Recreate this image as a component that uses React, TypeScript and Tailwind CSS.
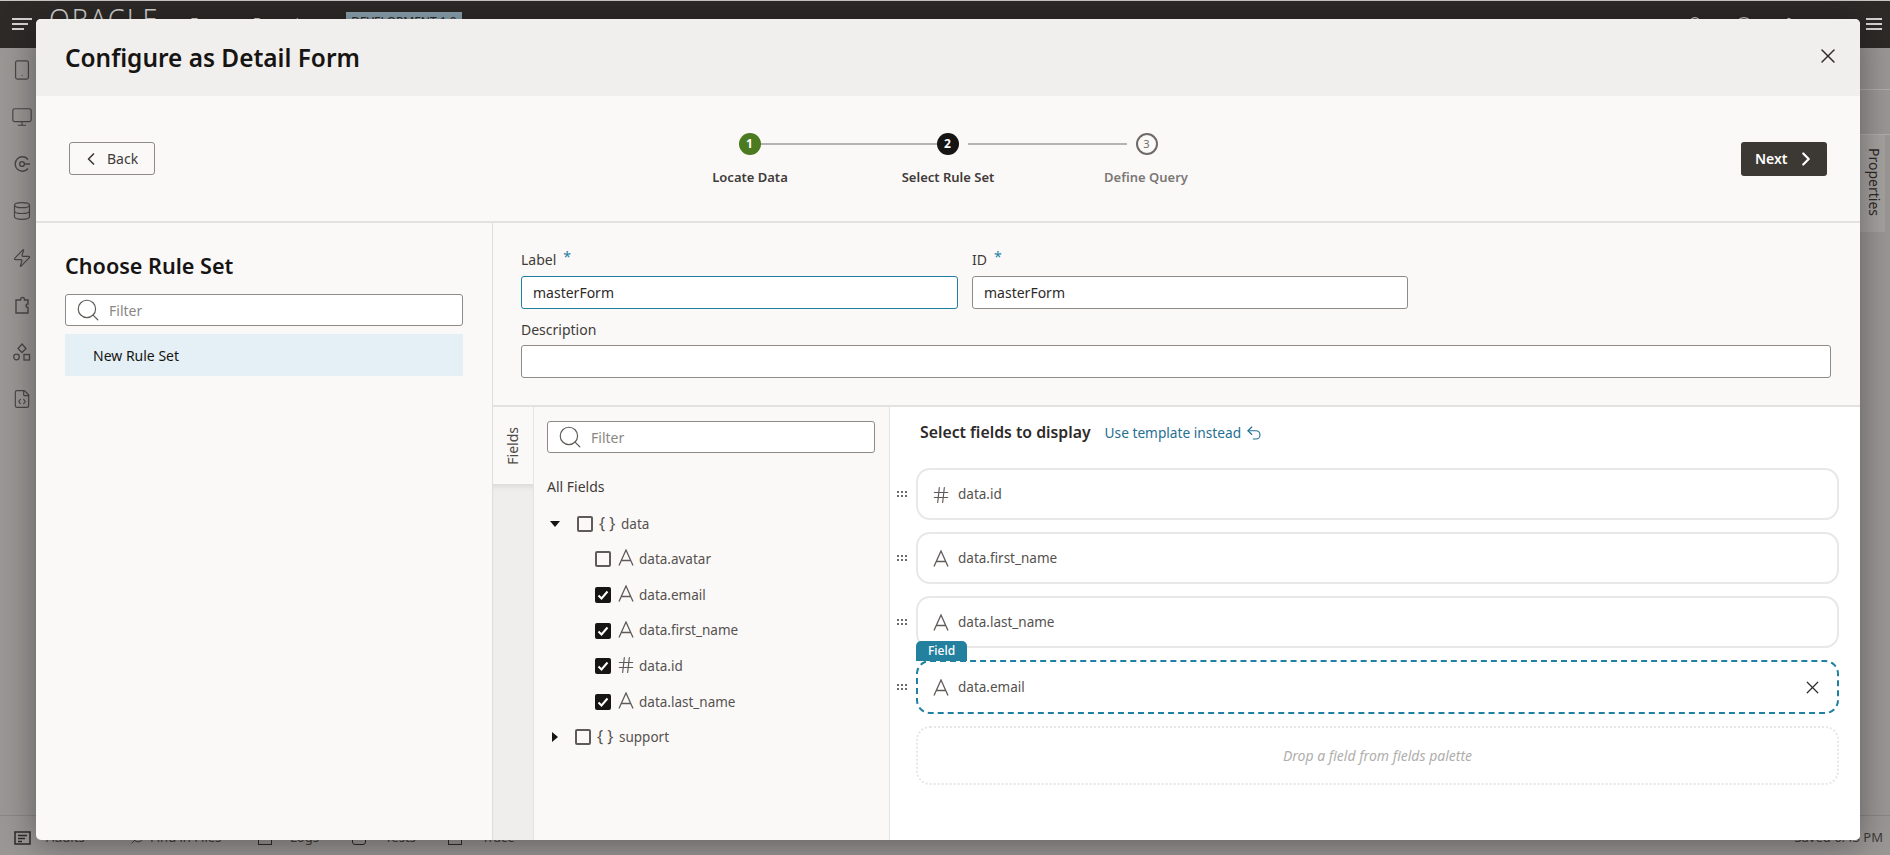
import { Bell, ChevronLeft, ChevronRight, CircleHelp, Database, FileCode, Hash, Monitor, Play, Search, Smartphone, Undo2, X, Zap } from "lucide-react";

const treeChildren = [
  { name: "data.avatar", type: "text", checked: false },
  { name: "data.email", type: "text", checked: true },
  { name: "data.first_name", type: "text", checked: true },
  { name: "data.id", type: "num", checked: true },
  { name: "data.last_name", type: "text", checked: true },
];

const cards = [
  { name: "data.id", type: "num" },
  { name: "data.first_name", type: "text" },
  { name: "data.last_name", type: "text" },
];

const TextIcon = () => (
  <svg width="16" height="17" viewBox="0 0 16 17" fill="none" stroke="#5f5b58" strokeWidth="1.3" className="shrink-0">
    <path d="M1 16.500 8 1l7 15.500M3.600 11.500h8.800" />
  </svg>
);

const TypeIcon = ({ type }: { type: string }) =>
  type === "num" ? <Hash size={20} strokeWidth={1.4} color="#5f5b58" className="-mx-[2px] shrink-0" /> : <TextIcon />;

const Checkbox = ({ checked }: { checked: boolean }) =>
  checked ? (
    <span className="flex h-4 w-4 shrink-0 items-center justify-center rounded-[2px] bg-[#161513]">
      <svg width="12" height="12" viewBox="0 0 12 12" fill="none" stroke="white" strokeWidth="2">
        <path d="M1.500 6.500 4.500 9.500 10.500 2.500" />
      </svg>
    </span>
  ) : (
    <span className="block h-4 w-4 shrink-0 rounded-[2px] border-2 border-[#5f5b58] bg-[#fbf9f8]" />
  );

const FilterBox = ({ className }: { className: string }) => (
  <div className={`flex h-[32px] items-center rounded-[3px] border border-[#8d8a87] bg-white pl-[9px] ${className}`}>
    <Search size={26} strokeWidth={1.1} color="#5f5b58" className="shrink-0" />
    <span className="ml-[8px] text-[14px] text-[#8a8784]">Filter</span>
  </div>
);

const Grip = () => (
  <div className="grid w-[26px] shrink-0 grid-cols-3 justify-items-center gap-y-[2px] pl-[6px] pr-[8px]">
    {[0, 1, 2, 3, 4, 5].map((i) => (
      <span key={i} className="h-[2px] w-[2px] bg-[#6f6b68]" />
    ))}
  </div>
);

const Field = ({ label, children }: { label: string; children: React.ReactNode }) => (
  <div>
    <div className="flex h-[20px] items-center text-[14px] text-[#3f3b39]">
      {label}
      {label !== "Description" && <span className="ml-[7px] -mt-[6px] text-[14px] text-[#1f7fa3]">*</span>}
    </div>
    {children}
  </div>
);

const OpenCircleIcon = () => (
  <svg width="20" height="20" viewBox="0 0 20 20" fill="none" stroke="#4a4745" strokeWidth="1.4">
    <path d="M16 5.500A7.200 7.200 0 1 0 16 14.500" />
    <circle cx="10" cy="10" r="2.400" />
    <path d="M12.500 10H18" />
  </svg>
);

const PuzzleIcon = () => (
  <svg width="20" height="20" viewBox="0 0 20 20" fill="none" stroke="#4a4745" strokeWidth="1.4">
    <path d="M4 5h4.500c0-3.500 4-3.500 4 0H16v4c-2.500 0-2.500 3.500 0 3.500V18H4z" />
  </svg>
);

const ShapesIcon = () => (
  <svg width="20" height="20" viewBox="0 0 20 20" fill="none" stroke="#4a4745" strokeWidth="1.3">
    <path d="M10 2 14 6.500 10 10.500 6 6.500z" />
    <circle cx="4.500" cy="15" r="2.800" />
    <rect x="12" y="12.500" width="5.500" height="5.500" />
  </svg>
);

const sideIcons = [
  <Smartphone key="a" size={22} strokeWidth={1.3} />,
  <Monitor key="b" size={22} strokeWidth={1.3} />,
  <OpenCircleIcon key="c" />,
  <Database key="d" size={20} strokeWidth={1.4} />,
  <Zap key="e" size={20} strokeWidth={1.4} />,
  <PuzzleIcon key="f" />,
  <ShapesIcon key="g" />,
  <FileCode key="h" size={20} strokeWidth={1.4} />,
];

export default function App() {
  return (
    <div className="relative flex h-[855px] w-[1890px] flex-col overflow-hidden bg-[#9a9795] font-['Noto_Sans',sans-serif] text-[#161513]">
      {/* page behind the dialog */}
      <div className="flex h-[48px] items-center border-t border-[#c9c8c7] bg-[#2e2a28] pb-[2px] text-[#d8d6d4]">
        <div className="ml-[12px] flex w-[20px] flex-col gap-[3px]">
          <span className="h-[2px] w-[20px] bg-[#d8d6d4]" />
          <span className="h-[2px] w-[16px] bg-[#d8d6d4]" />
          <span className="h-[2px] w-[12px] bg-[#d8d6d4]" />
        </div>
        <span className="ml-[17px] mt-[4px] w-[141px] self-start text-[27px] font-light leading-none tracking-[2px]">ORACLE</span>
        <span className="mt-[14px] w-[156px] self-start text-[15px] leading-none">Expense Report</span>
        <span className="mt-[11px] flex h-[24px] w-[116px] justify-center self-start bg-[#8ea6b2] pt-[4px] text-[12px] leading-none text-[#2e2a28]">DEVELOPMENT 1.0</span>
        <span className="ml-auto flex items-center gap-[29px] self-start pt-[15px]">
          <Bell size={20} strokeWidth={1.5} />
          <CircleHelp size={20} strokeWidth={1.5} />
          <Play size={20} strokeWidth={1.5} />
        </span>
        <span className="ml-[63px] mr-[8px] flex w-[16px] flex-col gap-[3px]">
          <span className="h-[2px] bg-[#d8d6d4]" />
          <span className="h-[2px] bg-[#d8d6d4]" />
          <span className="h-[2px] bg-[#d8d6d4]" />
        </span>
      </div>
      <div className="flex flex-1 justify-between">
        <div className="flex w-[44px] flex-col items-center gap-[27px] pt-[12px] text-[#4a4745]">
          {sideIcons.map((icon, i) => (
            <span key={i} className="flex h-[20px] items-center justify-center">
              {icon}
            </span>
          ))}
        </div>
        <div className="w-[30px]">
          <div className="h-[42px] border-b border-[#b0aeac]" />
          <div className="h-[45px] border-b border-[#b0aeac]" />
          <div className="flex h-[97px] items-center justify-center bg-[#a5a2a0] pb-[3px] pl-[4px] text-[14px] text-[#2e2a28] [writing-mode:vertical-rl]">
            Properties
          </div>
        </div>
      </div>
      <div className="flex h-[40px] items-center border-t border-[#8a8785] pl-[14px] pr-[7px] pt-[4px] text-[13px] text-[#3f3b39]">
        <span className="w-[32px]">
          <svg width="17" height="14" viewBox="0 0 17 14" fill="none" stroke="#2e2a28" strokeWidth="1.5">
            <path d="M1 1h15v12H1zM4 4.500h9M4 7.500h7M4 10.500h4" />
          </svg>
        </span>
        <span className="w-[84px]">Audits</span>
        <Search size={15} strokeWidth={1.5} className="-scale-x-100" />
        <span className="ml-[5px] w-[108px]">Find in Files</span>
        <span className="h-[14px] w-[14px] border border-[#2e2a28]" />
        <span className="ml-[18px] w-[62px]">Logs</span>
        <span className="h-[14px] w-[14px] rounded-[3px] border border-[#2e2a28]" />
        <span className="ml-[19px] w-[63px]">Tests</span>
        <span className="h-[14px] w-[14px] border border-[#2e2a28]" />
        <span className="ml-[20px]">Trace</span>
        <span className="ml-auto">Saved 6:43 PM</span>
      </div>

      {/* dialog */}
      <div className="absolute left-[36px] top-[19px] flex h-[821px] w-[1824px] flex-col overflow-hidden rounded-[5px] bg-[#fbf9f8] shadow-[0_4px_36px_rgba(0,0,0,0.4)]">
        <div className="flex h-[77px] shrink-0 items-center justify-between bg-[#f1efed] pl-[29px] pr-[20px]">
          <h1 className="text-[24.400px] font-semibold leading-[32px]">Configure as Detail Form</h1>
          <X size={24} strokeWidth={1.5} color="#2e2a28" className="-mt-[4px]" />
        </div>

        <div className="flex h-[127px] shrink-0 items-center justify-between border-b-2 border-[#e4e2e0] px-[33px]">
          <button className="flex h-[33px] w-[86px] items-center rounded-[3px] border border-[#8d8a87] pl-[11px] text-[14px] text-[#3f3b39]">
            <ChevronLeft size={20} strokeWidth={2} />
            <span className="ml-[6px]">Back</span>
          </button>

          <div className="flex flex-col items-center pt-[3px]">
            <div className="flex items-center">
              <span className="flex h-[22px] w-[22px] items-center justify-center rounded-full bg-[#4b7a20] text-[12px] font-bold text-white">1</span>
              <span className="h-[2px] w-[176px] bg-[#b5b3b1]" />
              <span className="flex h-[22px] w-[22px] items-center justify-center rounded-full bg-[#161513] text-[12px] font-bold text-white">2</span>
              <span className="ml-[9px] h-[2px] w-[159px] bg-[#b5b3b1]" />
              <span className="ml-[9px] flex h-[22px] w-[22px] items-center justify-center rounded-full border-2 border-[#6f6b68] text-[11px] text-[#6f6b68]">3</span>
            </div>
            <div className="mt-[12px] flex text-[13px] font-semibold leading-[20px]">
              <span className="w-[198px] text-center text-[#3f3b39]">Locate Data</span>
              <span className="w-[198px] text-center text-[#3f3b39]">Select Rule Set</span>
              <span className="w-[198px] text-center text-[#7b7876]">Define Query</span>
            </div>
          </div>

          <button className="flex h-[34px] w-[86px] items-center rounded-[3px] bg-[#3c3935] pl-[14px] text-[14px] font-semibold text-white">
            Next
            <ChevronRight size={22} strokeWidth={2.4} className="ml-[7px]" />
          </button>
        </div>

        <div className="flex min-h-0 flex-1">
          <div className="w-[457px] shrink-0 border-r border-[#dfdddb] pl-[29px] pr-[29px] pt-[29px]">
            <h2 className="text-[21.600px] font-semibold leading-[28px]">Choose Rule Set</h2>
            <FilterBox className="mt-[14px]" />
            <div className="mt-[8px] flex h-[42px] items-center bg-[#e4f0f6] pl-[28px] text-[14px]">New Rule Set</div>
          </div>

          <div className="flex min-w-0 flex-1 flex-col">
            <div className="h-[184px] shrink-0 border-b-2 border-[#e4e2e0] pl-[28px] pt-[26px]">
              <div className="flex gap-[14px]">
                <Field label="Label">
                  <div className="mt-[7px] flex h-[33px] w-[437px] items-center rounded-[3px] border border-[#1f7fa3] bg-white pl-[11px] text-[14px] text-[#2e2a28]">masterForm</div>
                </Field>
                <Field label="ID">
                  <div className="mt-[7px] flex h-[33px] w-[436px] items-center rounded-[3px] border border-[#8d8a87] bg-white pl-[11px] text-[14px] text-[#2e2a28]">masterForm</div>
                </Field>
              </div>
              <div className="mt-[10px]">
                <Field label="Description">
                  <div className="mt-[6px] h-[33px] w-[1310px] rounded-[3px] border border-[#8d8a87] bg-white" />
                </Field>
              </div>
            </div>

            <div className="flex min-h-0 flex-1">
              <div className="flex w-[41px] shrink-0 flex-col border-r border-[#e6e4e2]">
                <div className="flex h-[77px] items-center justify-center pr-[2px] text-[14px] text-[#4f4b48]">
                  <span className="rotate-180 [writing-mode:vertical-rl]">Fields</span>
                </div>
                <div className="flex-1 bg-[#efeeec] shadow-[inset_0_6px_6px_-4px_rgba(0,0,0,0.1)]" />
              </div>

              <div className="w-[356px] shrink-0 border-r border-[#e6e4e2] pl-[13px] pr-[15px] pt-[14px]">
                <FilterBox className="w-[328px]" />
                <div className="mt-[23px] flex h-[20px] items-center text-[14px] text-[#3f3b39]">All Fields</div>
                <div className="mt-[10px] text-[13.500px] text-[#55514e]">
                  <div className="flex h-[35.600px] items-center">
                    <span className="ml-[3px] h-0 w-0 border-x-[5px] border-t-[6px] border-x-transparent border-t-[#161513]" />
                    <span className="ml-[17px] block"><Checkbox checked={false} /></span>
                    <span className="ml-[6px] w-[22px] -mt-[2px] text-[16px]">{"{ }"}</span>
                    <span>data</span>
                  </div>
                  {treeChildren.map((f) => (
                    <div key={f.name} className="flex h-[35.600px] items-center pl-[48px]">
                      <Checkbox checked={f.checked} />
                      <span className="ml-[7px] -mt-[3px] block"><TypeIcon type={f.type} /></span>
                      <span className="ml-[5px]">{f.name}</span>
                    </div>
                  ))}
                  <div className="flex h-[35.600px] items-center">
                    <span className="ml-[5px] h-0 w-0 border-y-[5px] border-l-[6px] border-y-transparent border-l-[#161513]" />
                    <span className="ml-[17px] block"><Checkbox checked={false} /></span>
                    <span className="ml-[6px] w-[22px] -mt-[2px] text-[16px]">{"{ }"}</span>
                    <span>support</span>
                  </div>
                </div>
              </div>

              <div className="min-w-0 flex-1 bg-white pt-[16px]">
                <div className="flex h-[20px] items-center pl-[30px]">
                  <span className="text-[15.800px] font-semibold text-[#2e2a28]">Select fields to display</span>
                  <span className="ml-[14px] text-[13.700px] text-[#1f7091]">Use template instead</span>
                  <Undo2 size={18} strokeWidth={1.5} color="#1f7091" className="ml-[4px]" />
                </div>
                <div className="mt-[25px] flex flex-col gap-[12px] pr-[21px]">
                  {cards.map((c) => (
                    <div key={c.name} className="flex items-center">
                      <Grip />
                      <div className="flex h-[52px] flex-1 items-center rounded-[14px] border-2 border-[#e9e8e6] pl-[15px] pt-[1px] text-[13.500px] text-[#55514e]">
                        <TypeIcon type={c.type} />
                        <span className="ml-[9px]">{c.name}</span>
                      </div>
                    </div>
                  ))}
                  <div className="flex items-center">
                    <Grip />
                    <div className="relative flex h-[54px] flex-1 items-center rounded-[14px] border-2 border-dashed border-[#1f80a3] pl-[15px] pr-[14px] pt-[1px] text-[13.500px] text-[#55514e]">
                      <span className="absolute -left-[2px] -top-[21px] flex h-[20px] w-[51px] items-center justify-center rounded-t-[5px] bg-[#23809f] text-[12px] font-medium text-white">Field</span>
                      <TextIcon />
                      <span className="ml-[9px]">data.email</span>
                      <X size={21} strokeWidth={1.4} color="#2e2a28" className="ml-auto" />
                    </div>
                  </div>
                  <div className="flex">
                    <span className="w-[26px] shrink-0" />
                    <div className="flex h-[59px] flex-1 items-center justify-center rounded-[14px] border-2 border-dotted border-[#e8e7e6] text-[14px] italic text-[#b0aeac]">
                      Drop a field from fields palette
                    </div>
                  </div>
                </div>
              </div>
            </div>
          </div>
        </div>
      </div>
    </div>
  );
}
